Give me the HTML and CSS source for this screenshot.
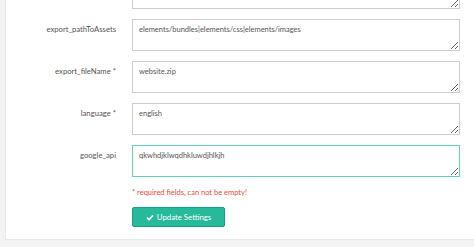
FILE: index.html
```html
<!DOCTYPE html>
<html lang="en">
<head>
    <meta charset="UTF-8">
    <title>Settings</title>
    <link rel="stylesheet" href="styles.css">
</head>
<body>
    <div class="panel">
        <form class="settings-form">
            <div class="form-row">
                <label class="form-label"></label>
                <textarea class="form-input"></textarea>
            </div>
            <div class="form-row">
                <label class="form-label">export_pathToAssets</label>
                <textarea class="form-input">elements/bundles|elements/css|elements/images</textarea>
            </div>
            <div class="form-row">
                <label class="form-label">export_fileName *</label>
                <textarea class="form-input">website.zip</textarea>
            </div>
            <div class="form-row">
                <label class="form-label">language *</label>
                <textarea class="form-input">english</textarea>
            </div>
            <div class="form-row">
                <label class="form-label">google_api</label>
                <textarea class="form-input focused">qkwhdjklwqdhkluwdjhlkjh</textarea>
            </div>
            <div class="form-row last">
                <span class="form-label"></span>
                <div class="form-actions">
                    <p class="form-error">* required fields, can not be empty!</p>
                    <button type="button" class="btn-update">
                        <svg width="8" height="7" viewBox="0 0 9 8"><path d="M1 4.2 L3.4 6.5 L8 1.5" fill="none" stroke="#fff" stroke-width="1.9"/></svg>
                        Update Settings
                    </button>
                </div>
            </div>
        </form>
    </div>
</body>
</html>
```

FILE: styles.css
```css
body {
    margin: 0;
    background-color: #f3f3f3;
    font-family: Lato, "Open Sans", sans-serif;
    font-size: 7.5px;
    line-height: 9px;
    color: #73879c;
}
.panel {
    margin: -34px 0 0 5px;
    background-color: #fff;
    border: 1px solid #e6e9ed;
    border-right: none;
    padding: 10px 0 12px 0;
}
.form-row {
    display: flex;
    align-items: flex-start;
    margin-bottom: 10px;
}
.form-row.last {
    margin-bottom: 0;
}
.form-label {
    width: 110px;
    flex-shrink: 0;
    text-align: right;
    padding-right: 16px;
    padding-top: 6px;
    font-size: 7.7px;
    color: #555;
}
.form-input {
    width: 328px;
    height: 32px;
    box-sizing: border-box;
    border: 1px solid #ccc;
    padding: 5px 6px;
    font-family: Lato, "Open Sans", sans-serif;
    font-size: 7.5px;
    line-height: 9px;
    color: #555;
    resize: vertical;
    margin: 0;
    outline: none;
}
.form-input.focused {
    border-color: #5fd3b6;
}
.form-actions {
    display: flex;
    flex-direction: column;
    align-items: flex-start;
}
.form-error {
    margin: 1px 0 10px 0;
    color: #e74c3c;
}
.btn-update {
    display: flex;
    align-items: center;
    gap: 3px;
    width: 93px;
    height: 20px;
    justify-content: center;
    background-color: #26b99a;
    border: 1px solid #169f85;
    border-radius: 2px;
    color: #fff;
    font-family: Lato, "Open Sans", sans-serif;
    font-size: 7.8px;
    padding: 0;
}
```
